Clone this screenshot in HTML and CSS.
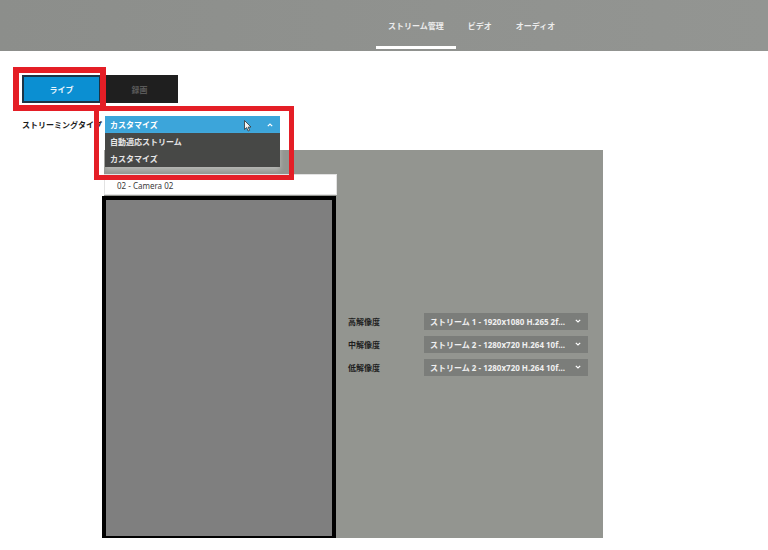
FILE: index.html
```html
<!DOCTYPE html>
<html lang="ja">
<head>
    <meta charset="UTF-8">
    <meta name="viewport" content="width=device-width, initial-scale=1.0">
    <title>ストリーム管理</title>
    <link rel="stylesheet" href="styles.css">
</head>
<body>
    <header class="topbar">
        <nav class="tabs">
            <a class="tab active">ストリーム管理</a>
            <a class="tab">ビデオ</a>
            <a class="tab">オーディオ</a>
        </nav>
    </header>

    <main class="page">
        <div class="modes">
            <button class="mode live">ライブ</button>
            <button class="mode rec">録画</button>
        </div>

        <div class="stream-type">
            <span class="field-label">ストリーミングタイプ</span>
            <div class="dropdown">
                <div class="dropdown-head">
                    <span>カスタマイズ</span>
                    <svg class="caret" width="6" height="4" viewBox="0 0 6 4"><path d="M0.8 3.2 L3 1 L5.2 3.2" fill="none" stroke="#fff" stroke-width="1.2"/></svg>
                </div>
                <ul class="dropdown-list">
                    <li>自動適応ストリーム</li>
                    <li>カスタマイズ</li>
                </ul>
                <svg class="pointer" width="8" height="12" viewBox="0 0 8 12"><path d="M0.5 0.5 L0.5 9.5 L2.6 7.6 L4.2 11 L5.6 10.3 L4.1 7.1 L7 7 Z" fill="#f4f4f4" stroke="#333" stroke-width="0.8"/></svg>
            </div>
        </div>

        <section class="panel">
            <div class="cam-col">
                <div class="cam-title">02 - Camera 02</div>
                <div class="cam-view"></div>
            </div>
            <div class="res-col">
                <div class="res-row">
                    <span class="res-label">高解像度</span>
                    <div class="res-select">
                        <span>ストリーム 1 - 1920x1080 H.265 2f...</span>
                        <svg width="6" height="4" viewBox="0 0 6 4"><path d="M0.8 0.8 L3 3 L5.2 0.8" fill="none" stroke="#fff" stroke-width="1.2"/></svg>
                    </div>
                </div>
                <div class="res-row">
                    <span class="res-label">中解像度</span>
                    <div class="res-select">
                        <span>ストリーム 2 - 1280x720 H.264 10f...</span>
                        <svg width="6" height="4" viewBox="0 0 6 4"><path d="M0.8 0.8 L3 3 L5.2 0.8" fill="none" stroke="#fff" stroke-width="1.2"/></svg>
                    </div>
                </div>
                <div class="res-row">
                    <span class="res-label">低解像度</span>
                    <div class="res-select">
                        <span>ストリーム 2 - 1280x720 H.264 10f...</span>
                        <svg width="6" height="4" viewBox="0 0 6 4"><path d="M0.8 0.8 L3 3 L5.2 0.8" fill="none" stroke="#fff" stroke-width="1.2"/></svg>
                    </div>
                </div>
            </div>
        </section>

        <div class="mark mark-live"></div>
        <div class="mark mark-type"></div>
    </main>
</body>
</html>
```

FILE: styles.css
```css
body {
    margin: 0;
    font-family: "Noto Sans", "Noto Sans CJK JP", sans-serif;
    font-size: 8px;
    background-color: #fff;
    color: #1c1c1c;
}
.topbar {
    height: 51px;
    background: linear-gradient(to right, #8c8e8b, #939592);
}
.tabs {
    display: flex;
    padding-left: 376px;
}
.tab {
    position: relative;
    display: flex;
    align-items: center;
    height: 51px;
    padding: 0 12px;
    color: #ececec;
    font-weight: bold;
}
.tab.active::after {
    content: "";
    position: absolute;
    left: 0;
    right: 0;
    bottom: 2px;
    height: 3px;
    background: #fff;
}
.page {
    position: relative;
    padding: 24px 0 0 22px;
}
.modes {
    display: flex;
}
.mode {
    height: 28px;
    padding: 0;
    border: none;
    font-family: inherit;
    font-size: 8px;
    font-weight: bold;
}
.live {
    width: 79px;
    background: #0b8fd2;
    border: 2px solid #1b3446;
    color: #e8f4fb;
}
.rec {
    width: 77px;
    background: #1f1f1f;
    color: #5a5a5a;
}
.stream-type {
    display: flex;
    align-items: center;
    margin-top: 13px;
}
.field-label {
    width: 83px;
    font-weight: bold;
    white-space: nowrap;
}
.dropdown {
    position: relative;
    width: 175px;
    z-index: 2;
}
.dropdown-head {
    display: flex;
    align-items: center;
    height: 17px;
    padding-left: 5px;
    background: #3ca5da;
    color: #fff;
    font-weight: bold;
}
.caret {
    margin-left: auto;
    margin-right: 7px;
}
.dropdown-list {
    position: absolute;
    top: 17px;
    left: 0;
    right: 0;
    margin: 0;
    padding: 0;
    list-style: none;
    background: #474846;
    color: #e6e6e6;
    font-weight: bold;
    box-shadow: 0 3px 5px rgba(255, 255, 255, 0.35);
}
.dropdown-list li {
    height: 17px;
    line-height: 17px;
    padding-left: 5px;
}
.pointer {
    position: absolute;
    left: 139px;
    top: 4px;
}
.panel {
    display: flex;
    width: 499px;
    height: 388px;
    margin: 17px 0 0 82px;
    background: #939590;
}
.cam-col {
    display: flex;
    flex-direction: column;
    width: 233px;
    padding-top: 24px;
}
.cam-title {
    height: 21px;
    line-height: 21px;
    padding-left: 12px;
    background: #fff;
    border: 1px solid #e2e2e2;
    box-sizing: border-box;
    color: #3a3a3a;
}
.cam-view {
    flex: 1;
    width: 234px;
    margin: 1px 0 -2px -2px;
    background: #7f7f7f;
    border: 4px solid #000;
    box-sizing: border-box;
}
.res-col {
    flex: 1;
    display: flex;
    flex-direction: column;
    justify-content: center;
    gap: 6px;
    padding-left: 11px;
}
.res-row {
    display: flex;
    align-items: center;
}
.res-label {
    width: 76px;
    font-weight: bold;
    color: #1e1e1e;
}
.res-select {
    display: flex;
    align-items: center;
    justify-content: space-between;
    width: 164px;
    height: 17px;
    padding: 0 7px 0 6px;
    box-sizing: border-box;
    background: #7b7d7a;
    color: #f0f0f0;
    font-weight: bold;
    white-space: nowrap;
}
.mark {
    position: absolute;
    border: solid #e41e26;
    box-sizing: border-box;
    z-index: 3;
}
.mark-live {
    left: 13px;
    top: 16px;
    width: 93px;
    height: 44px;
    border-width: 6px;
}
.mark-type {
    left: 94px;
    top: 55px;
    width: 200px;
    height: 74px;
    border-width: 5px;
}
```
